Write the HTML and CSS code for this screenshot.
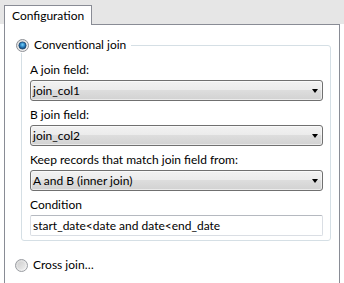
FILE: index.html
```html
<!DOCTYPE html>
<html lang="en">
<head>
    <meta charset="UTF-8">
    <meta name="viewport" content="width=device-width, initial-scale=1.0">
    <title>Join settings</title>
    <link rel="stylesheet" href="styles.css">
</head>
<body>
    <div class="tabstrip">
        <div class="tab">Configuration</div>
    </div>
    <div class="page">
        <fieldset class="group">
            <legend class="option">
                <svg class="radio" viewBox="0 0 13 13" width="13" height="13">
                    <defs>
                        <linearGradient id="rbOn" x1="0" y1="0" x2="1" y2="1">
                            <stop offset="0" stop-color="#d9d9d9"/>
                            <stop offset="1" stop-color="#f6f6f6"/>
                        </linearGradient>
                        <radialGradient id="dotOn" cx="0.5" cy="0.4" r="0.6">
                            <stop offset="0" stop-color="#74d3f9"/>
                            <stop offset="0.55" stop-color="#2a7fc0"/>
                            <stop offset="1" stop-color="#0f3a63"/>
                        </radialGradient>
                    </defs>
                    <circle cx="6.5" cy="6.5" r="6" fill="url(#rbOn)" stroke="#8e9196"/>
                    <circle cx="6.5" cy="6.5" r="3.6" fill="url(#dotOn)" stroke="#1c4a73" stroke-width="0.8"/>
                </svg>
                <span>Conventional join</span>
            </legend>
            <div class="field">
                <label>A join field:</label>
                <div class="combo"><span>join_col1</span><i class="arrow"></i></div>
            </div>
            <div class="field">
                <label>B join field:</label>
                <div class="combo"><span>join_col2</span><i class="arrow"></i></div>
            </div>
            <div class="field">
                <label>Keep records that match join field from:</label>
                <div class="combo"><span>A and B (inner join)</span><i class="arrow"></i></div>
            </div>
            <div class="field">
                <label>Condition</label>
                <div class="textbox">start_date&lt;date and date&lt;end_date</div>
            </div>
        </fieldset>
        <div class="option cross">
            <svg class="radio" viewBox="0 0 13 13" width="13" height="13">
                <defs>
                    <linearGradient id="rbOff" x1="0" y1="0" x2="1" y2="1">
                        <stop offset="0" stop-color="#d4d4d4"/>
                        <stop offset="1" stop-color="#f8f8f8"/>
                    </linearGradient>
                    <linearGradient id="dotOff" x1="0" y1="0" x2="1" y2="1">
                        <stop offset="0" stop-color="#cfcfcf"/>
                        <stop offset="1" stop-color="#ececec"/>
                    </linearGradient>
                </defs>
                <circle cx="6.5" cy="6.5" r="6" fill="url(#rbOff)" stroke="#9a9da2"/>
                <circle cx="6.5" cy="6.5" r="3.8" fill="url(#dotOff)"/>
            </svg>
            <span>Cross join…</span>
        </div>
    </div>
</body>
</html>
```

FILE: styles.css
```css
body {
    margin: 0;
    background: #fff;
    color: #000;
    font-family: Lato, 'Open Sans', sans-serif;
    font-size: 12px;
    overflow: hidden;
}
.tabstrip {
    height: 24px;
    box-sizing: border-box;
    padding: 4px 0 0 4px;
    background: #e6e6e6;
    display: flex;
    align-items: flex-end;
}
.tab {
    width: 88px;
    height: 20px;
    box-sizing: border-box;
    border: 1px solid #898c95;
    border-bottom: none;
    background: #fff;
    padding-left: 7px;
    line-height: 19px;
    position: relative;
    top: 1px;
}
.page {
    margin: 0 4px;
    height: calc(100vh - 24px);
    border: 1px solid #898c95;
    border-bottom: none;
    box-sizing: border-box;
    padding-top: 12px;
}
.group {
    margin: 0 8px 0 16px;
    padding: 0 7px 4px 8px;
    border: 1px solid #d5dfe5;
    border-radius: 3px;
}
.option {
    display: flex;
    align-items: center;
    height: 16px;
    line-height: 16px;
}
.group legend {
    margin-left: -15px;
    padding: 0 5px 0 1px;
    background: #fff;
}
.radio {
    display: block;
    margin-right: 5px;
}
.field {
    margin-top: 6px;
}
.field:first-of-type {
    margin-top: 9px;
}
.field label {
    display: block;
    line-height: 15px;
    margin-bottom: 3px;
}
.combo {
    height: 21px;
    box-sizing: border-box;
    border: 1px solid #707070;
    border-radius: 3px;
    background: linear-gradient(#f2f2f2, #ebebeb 50%, #dddddd 50%, #d2d2d2);
    box-shadow: inset 0 0 0 1px rgba(255, 255, 255, 0.55);
    display: flex;
    align-items: center;
    padding: 0 4px 0 2px;
}
.combo span {
    flex: 1;
}
.arrow {
    width: 0;
    height: 0;
    border-left: 3.5px solid transparent;
    border-right: 3.5px solid transparent;
    border-top: 4px solid #000;
}
.textbox {
    height: 21px;
    box-sizing: border-box;
    border: 1px solid #dadee4;
    border-top-color: #b5b9c0;
    border-radius: 2px;
    padding: 0 2px;
    line-height: 19px;
    white-space: nowrap;
}
.cross {
    margin: 16px 0 0 10px;
}
```
